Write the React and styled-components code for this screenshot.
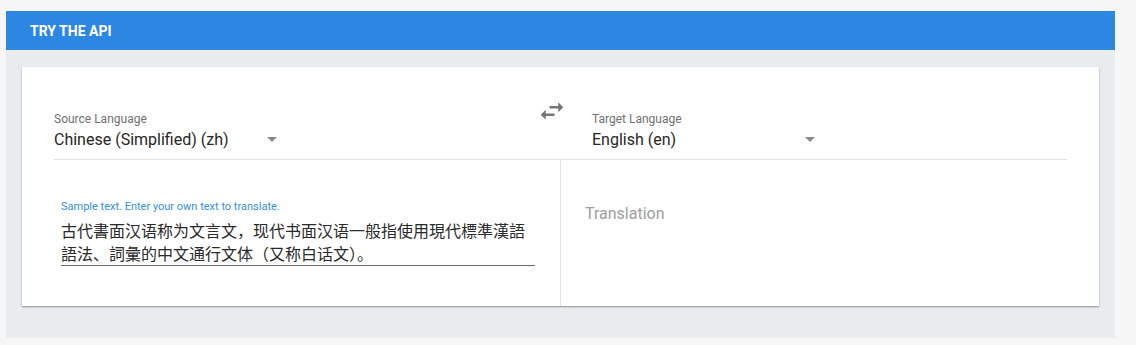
import React from "react";
import styled, { createGlobalStyle } from "styled-components";

const GlobalStyle = createGlobalStyle`
  html, body {
    margin: 0;
    padding: 0;
    background: #f6f6f6;
    font-family: Roboto, "Noto Sans", sans-serif;
  }
`;

const Panel = styled.section`
  margin: 11px 0 0 6px;
  width: 1109px;
  background: #e8ecef;
  padding-bottom: 32px;
`;

const Header = styled.div`
  height: 39px;
  background: #2c87e3;
  color: #fff;
  font-size: 14px;
  font-weight: 700;
  display: flex;
  align-items: center;
  padding-left: 24px;
`;

const Body = styled.div`
  padding: 17px 16px 0 16px;
`;

const Card = styled.div`
  background: #fff;
  box-shadow: 0 1px 2px rgba(0, 0, 0, 0.25), 0 1px 1px rgba(0, 0, 0, 0.15);
`;

const LangRow = styled.div`
  margin: 0 32px;
  display: flex;
  border-bottom: 1px solid #e0e0e0;
`;

const Field = styled.div`
  width: 232px;
  padding: 45px 0 10px 0;
  margin-left: ${(p) => p.offset || 0}px;
`;

const Label = styled.div`
  font-size: 12px;
  line-height: 14px;
  color: #707070;
`;

const Select = styled.div`
  display: flex;
  align-items: center;
  justify-content: space-between;
  padding-right: 9px;
  margin-top: 4px;
  font-size: 16px;
  line-height: 19px;
  color: #262626;
`;

const Caret = styled.span`
  width: 0;
  height: 0;
  border-left: 5px solid transparent;
  border-right: 5px solid transparent;
  border-top: 5px solid #8a8a8a;
`;

const SwapButton = styled.div`
  margin: 29px 0 0 251px;
  width: 30px;
  height: 30px;
  color: #757575;
  display: flex;
`;

const TextRow = styled.div`
  display: grid;
  grid-template-columns: 539px 1fr;
`;

const SourceCol = styled.div`
  padding: 40px 25px 40px 39px;
  border-right: 1px solid #e3e3e3;
`;

const TargetCol = styled.div`
  padding: 44px 24px 0 24px;
`;

const Hint = styled.div`
  font-size: 11px;
  line-height: 13px;
  color: #3390dc;
`;

const SourceText = styled.div`
  margin-top: 6px;
  font-family: "Noto Sans CJK SC", "Noto Sans CJK TC", sans-serif;
  font-size: 16px;
  line-height: 23px;
  color: #2a2a2a;
  border-bottom: 1px solid #6b6b6b;
`;

const Placeholder = styled.div`
  font-size: 16px;
  line-height: 19px;
  color: #9e9e9e;
`;

const SwapIcon = () => (
  <svg width="30" height="30" viewBox="0 0 24 24" fill="currentColor">
    <path d="M6.99 11L3 15l3.99 4v-3H14v-2H6.99v-3zM21 9l-3.99-4v3H10v2h7.01v3L21 9z" />
  </svg>
);

const App = () => {
  return (
    <>
      <GlobalStyle />
      <Panel>
        <Header>TRY THE API</Header>
        <Body>
          <Card>
            <LangRow>
              <Field>
                <Label>Source Language</Label>
                <Select>
                  Chinese (Simplified) (zh)
                  <Caret />
                </Select>
              </Field>
              <SwapButton>
                <SwapIcon />
              </SwapButton>
              <Field offset={25}>
                <Label>Target Language</Label>
                <Select>
                  English (en)
                  <Caret />
                </Select>
              </Field>
            </LangRow>
            <TextRow>
              <SourceCol>
                <Hint>Sample text. Enter your own text to translate.</Hint>
                <SourceText>
                  古代書面汉语称为文言文，现代书面汉语一般指使用現代標準漢語語法、詞彙的中文通行文体（又称白话文）。
                </SourceText>
              </SourceCol>
              <TargetCol>
                <Placeholder>Translation</Placeholder>
              </TargetCol>
            </TextRow>
          </Card>
        </Body>
      </Panel>
    </>
  );
};

export default App;
